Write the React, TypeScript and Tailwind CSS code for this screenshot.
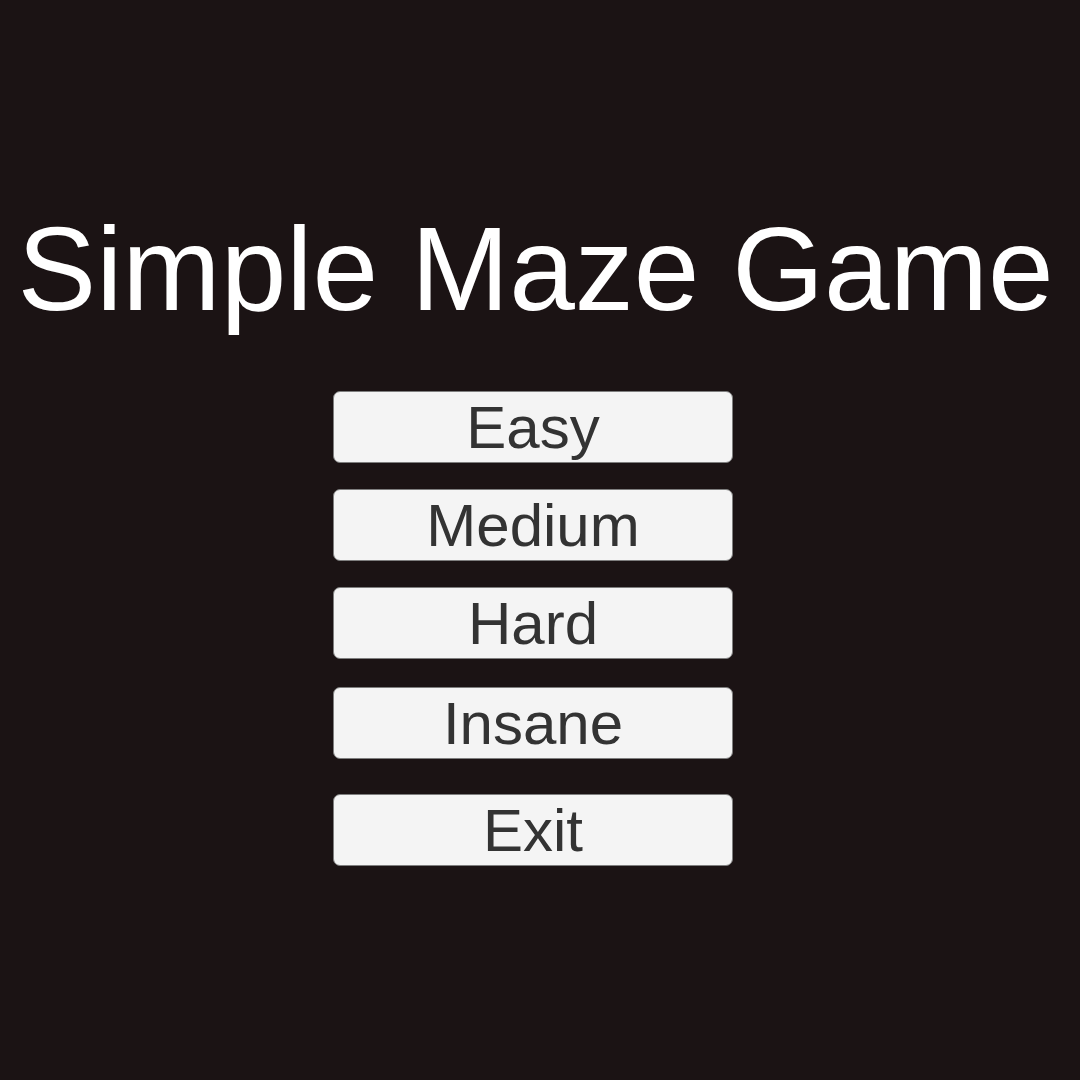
const levels = [
  { label: "Easy", spacing: "" },
  { label: "Medium", spacing: "" },
  { label: "Hard", spacing: "" },
  { label: "Insane", spacing: "mt-[2px]" },
  { label: "Exit", spacing: "mt-[9px]" },
];

function MenuButton({ label, className = "" }: { label: string; className?: string }) {
  return (
    <button
      className={`h-[72px] w-[400px] rounded-[7px] border border-[#7e7e7e] bg-[#f4f4f4] text-[60px] leading-[72px] text-[#333333] ${className}`}
    >
      {label}
    </button>
  );
}

export default function App() {
  return (
    <div
      className="flex h-[1080px] w-[1080px] flex-col items-center bg-[#1b1314] pr-[14px] pt-[210px]"
      style={{ fontFamily: '"Liberation Sans", Arial, sans-serif' }}
    >
      <h1 className="ml-[5px] text-[118px] leading-[118px] text-white">Simple Maze Game</h1>

      <div className="mt-[63px] flex flex-col items-center gap-[26px]">
        {levels.map((level) => (
          <MenuButton key={level.label} label={level.label} className={level.spacing} />
        ))}
      </div>
    </div>
  );
}
